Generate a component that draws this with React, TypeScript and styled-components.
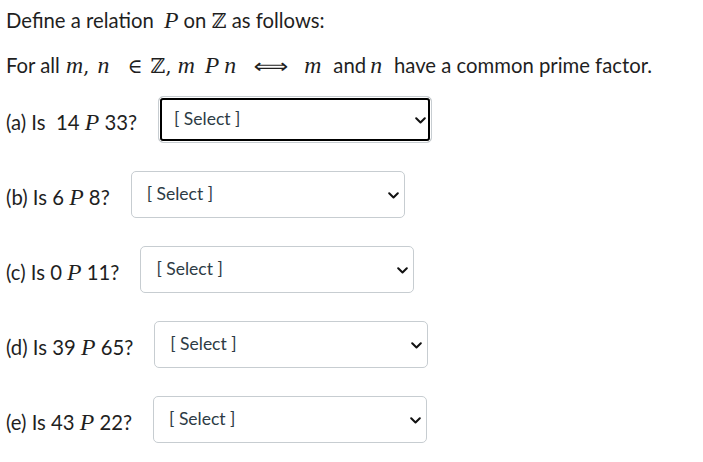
import styled, { createGlobalStyle } from "styled-components";

const GlobalStyle = createGlobalStyle`
  html, body {
    margin: 0;
    padding: 0;
    background: #ffffff;
  }
  body {
    font-family: Lato, "Open Sans", sans-serif;
    color: #1f1f1f;
  }
`;

const Page = styled.div`
  padding: 6px 6px;
  font-size: 20.3px;
`;

const Line = styled.p`
  margin: 0 0 17px;
  height: 28px;
  line-height: 28px;
  white-space: nowrap;
`;

const M = styled.span<{ $l?: number }>`
  font-family: "Liberation Serif", "DejaVu Serif", serif;
  font-style: italic;
  font-size: 1.17em;
  line-height: 1;
  margin-left: ${(p) => p.$l ?? 0}px;
`;

const Sym = styled.span<{ $l?: number }>`
  font-family: "DejaVu Serif", serif;
  font-size: 1em;
  line-height: 1;
  margin-left: ${(p) => p.$l ?? 0}px;
`;

const Arrow = styled.span<{ $l?: number }>`
  display: inline-block;
  width: 36px;
  font-family: "DejaVu Sans", sans-serif;
  font-size: 1em;
  line-height: 1;
  text-align: center;
  transform: scaleX(1.2);
  margin-left: ${(p) => p.$l ?? 0}px;
`;

const Word = styled.span<{ $l?: number }>`
  margin-left: ${(p) => p.$l ?? 0}px;
`;

const Questions = styled.div`
  margin-top: 1px;
  display: flex;
  flex-direction: column;
  gap: 28px;
`;

const Row = styled.div`
  display: flex;
  align-items: center;
  gap: 21px;
`;

const Label = styled.span`
  padding-top: 6px;
  white-space: nowrap;
`;

const SelectWrap = styled.div<{ $focused?: boolean }>`
  position: relative;
  width: 274px;
  height: 47px;
  box-sizing: border-box;
  border: 1px solid #c7cdd1;
  border-radius: 5px;
  background: #fff;
  box-shadow: ${(p) =>
    p.$focused ? "inset 0 0 0 1px #fff, inset 0 0 0 3px #000" : "none"};
`;

const NativeSelect = styled.select`
  appearance: none;
  -webkit-appearance: none;
  width: 100%;
  height: 100%;
  border: none;
  background: transparent;
  padding: 0 30px 2px 15px;
  font-family: Lato, sans-serif;
  font-size: 17.5px;
  color: #2d3b45;
  outline: none;
`;

const Chevron = styled.svg`
  position: absolute;
  right: 5px;
  top: 50%;
  margin-top: -3px;
  width: 11px;
  height: 7px;
  pointer-events: none;
`;

const questions = [
  { key: "a", a: "14", b: "33", wide: true },
  { key: "b", a: "6", b: "8" },
  { key: "c", a: "0", b: "11" },
  { key: "d", a: "39", b: "65" },
  { key: "e", a: "43", b: "22" },
];

const App = () => {
  return (
    <Page>
      <GlobalStyle />
      <Line>
        Define a relation <M $l={5}>P</M> on <Sym>ℤ</Sym> as follows:
      </Line>
      <Line>
        For all<M $l={6}>m</M>
        <Sym>,</Sym>
        <M $l={8}>n</M>
        <Sym $l={18}>∈</Sym>
        <Sym $l={8}>ℤ</Sym>
        <Sym>,</Sym>
        <M $l={6}>m</M>
        <M $l={10}>P</M>
        <M $l={5}>n</M>
        <Arrow $l={17}>⟺</Arrow>
        <M $l={15}>m</M>
        <Word $l={12}>and</Word>
        <M $l={4}>n</M>
        <Word $l={12}>have a common prime factor.</Word>
      </Line>
      <Questions>
        {questions.map((q, i) => (
          <Row key={q.key}>
            <Label>
              ({q.key}) Is {q.wide ? "\u00a0" : ""}
              {q.a} <M>P</M> {q.b}?
            </Label>
            <SelectWrap $focused={i === 0}>
              <NativeSelect defaultValue="">
                <option value="">[ Select ]</option>
                <option value="yes">Yes</option>
                <option value="no">No</option>
              </NativeSelect>
              <Chevron viewBox="0 0 11 7">
                <path
                  d="M1.2 1.2 L5.5 5.5 L9.8 1.2"
                  fill="none"
                  stroke="#111"
                  strokeWidth="2"
                  strokeLinecap="round"
                  strokeLinejoin="round"
                />
              </Chevron>
            </SelectWrap>
          </Row>
        ))}
      </Questions>
    </Page>
  );
};

export default App;
